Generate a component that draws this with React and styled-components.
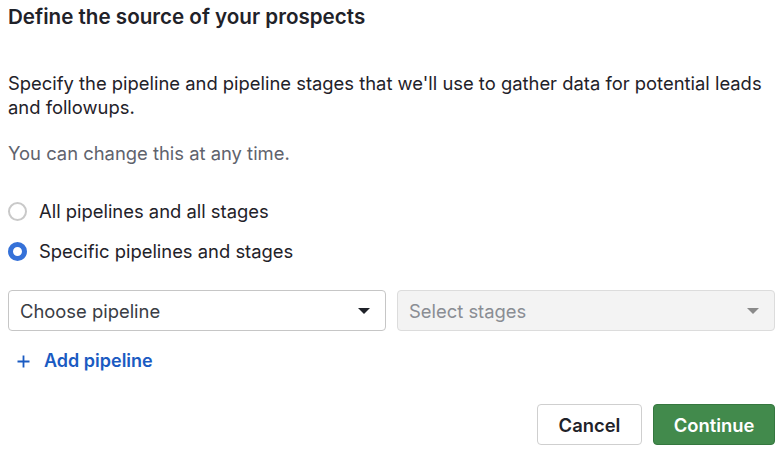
import React, { useState } from 'react';
import styled, { createGlobalStyle } from 'styled-components';

const GlobalStyle = createGlobalStyle`
  * { box-sizing: border-box; }
  body {
    margin: 0;
    background: #fff;
    font-family: Inter, "Noto Sans", sans-serif;
    color: #1f2229;
  }
`;

const Container = styled.div`
  width: 781px;
  padding: 5px 6px 0 8px;
  display: flex;
  flex-direction: column;
`;

const Title = styled.h1`
  margin: 0;
  font-size: 20.6px;
  line-height: 24px;
  font-weight: 600;
  color: #1f2229;
`;

const Text = styled.p`
  margin: ${(p) => p.margin || '0'};
  font-size: 18.4px;
  line-height: 24px;
  color: ${(p) => (p.muted ? '#5f636d' : '#1f2229')};
`;

const RadioGroup = styled.div`
  display: flex;
  flex-direction: column;
  gap: 16px;
  margin-top: 34px;
`;

const RadioRow = styled.label`
  display: flex;
  align-items: center;
  gap: 12px;
  font-size: 18.4px;
  line-height: 24px;
  cursor: pointer;
`;

const RadioDot = styled.span`
  width: 19px;
  height: 19px;
  border-radius: 50%;
  flex-shrink: 0;
  border: ${(p) => (p.checked ? '5.5px solid #3571d8' : '2px solid #c9c9c9')};
  background: #fff;
`;

const SelectRow = styled.div`
  display: grid;
  grid-template-columns: 1fr 1fr;
  gap: 11px;
  margin-top: 27px;
`;

const Select = styled.div`
  height: 41px;
  border: 1px solid ${(p) => (p.disabled ? '#dcdcdc' : '#c6c6c6')};
  border-radius: 4px;
  background: ${(p) => (p.disabled ? '#f3f3f3' : '#fff')};
  display: flex;
  align-items: center;
  justify-content: space-between;
  padding: 0 15px 0 11px;
  font-size: 18.4px;
  color: ${(p) => (p.disabled ? '#8a8d93' : '#3a3d44')};
`;

const Caret = styled.span`
  width: 0;
  height: 0;
  border-left: 6px solid transparent;
  border-right: 6px solid transparent;
  border-top: 6px solid ${(p) => (p.disabled ? '#8a8a8a' : '#1f2229')};
`;

const AddButton = styled.button`
  align-self: flex-start;
  margin-top: 18px;
  padding: 0 0 0 9px;
  border: none;
  background: none;
  display: flex;
  align-items: center;
  gap: 14px;
  font-family: inherit;
  font-size: 18px;
  font-weight: 600;
  line-height: 24px;
  color: #1a5bc2;
  cursor: pointer;
`;

const Footer = styled.div`
  display: flex;
  justify-content: flex-end;
  gap: 11px;
  margin-top: 31px;
`;

const Button = styled.button`
  height: 41px;
  width: ${(p) => (p.primary ? '122px' : '105px')};
  padding: 0;
  border-radius: 4px;
  border: 1px solid ${(p) => (p.primary ? '#35773f' : '#cfcfcf')};
  background: ${(p) => (p.primary ? '#428a4c' : '#fff')};
  color: ${(p) => (p.primary ? '#fff' : '#1f2229')};
  font-family: inherit;
  font-size: 18.4px;
  font-weight: 600;
  cursor: pointer;
`;

const PlusIcon = () => (
  <svg width="13" height="13" viewBox="0 0 13 13">
    <path d="M6.5 0.5v12M0.5 6.5h12" stroke="#1a5bc2" strokeWidth="1.8" />
  </svg>
);

export default function App() {
  const [mode, setMode] = useState('specific');

  return (
    <Container>
      <GlobalStyle />
      <Title>Define the source of your prospects</Title>
      <Text margin="42px 0 0">
        Specify the pipeline and pipeline stages that we'll use to gather data for potential leads
        and followups.
      </Text>
      <Text muted margin="22px 0 0">You can change this at any time.</Text>
      <RadioGroup>
        <RadioRow onClick={() => setMode('all')}>
          <RadioDot checked={mode === 'all'} />
          All pipelines and all stages
        </RadioRow>
        <RadioRow onClick={() => setMode('specific')}>
          <RadioDot checked={mode === 'specific'} />
          Specific pipelines and stages
        </RadioRow>
      </RadioGroup>
      <SelectRow>
        <Select>
          Choose pipeline
          <Caret />
        </Select>
        <Select disabled>
          Select stages
          <Caret disabled />
        </Select>
      </SelectRow>
      <AddButton>
        <PlusIcon />
        Add pipeline
      </AddButton>
      <Footer>
        <Button>Cancel</Button>
        <Button primary>Continue</Button>
      </Footer>
    </Container>
  );
}
